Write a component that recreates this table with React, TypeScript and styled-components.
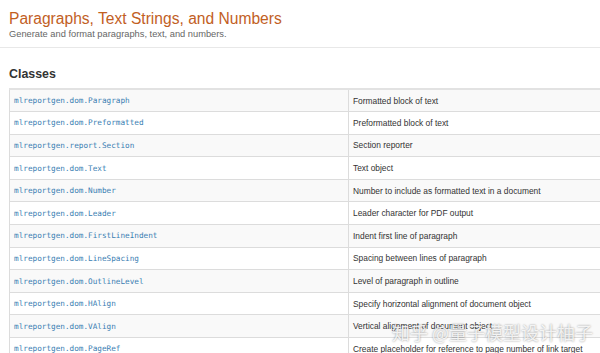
import React from "react";
import styled, { createGlobalStyle } from "styled-components";

const Global = createGlobalStyle`
  body {
    margin: 0;
    background: #fff;
    font-family: "Liberation Sans", Arial, sans-serif;
    overflow: hidden;
  }
`;

const Page = styled.div`
  position: relative;
  width: 600px;
  height: 353px;
  overflow: hidden;
`;

const Header = styled.header`
  padding: 9px 9px 7px;
  border-bottom: 1px solid #e8e8e8;
`;

const Title = styled.h1`
  margin: 0;
  font-size: 15.6px;
  font-weight: normal;
  color: #c2601f;
  line-height: 19px;
`;

const Subtitle = styled.p`
  margin: 0;
  font-size: 9.3px;
  color: #666;
  line-height: 12px;
`;

const Section = styled.section`
  padding: 19px 0 0 9px;
`;

const Heading = styled.h2`
  margin: 0 0 6px;
  font-size: 12.4px;
  font-weight: bold;
  color: #333;
  line-height: 15px;
`;

const Table = styled.table`
  width: 600px;
  border-collapse: collapse;
  border-top: 2px solid #e2e2e2;
  > tbody > tr:nth-child(odd) {
    background: #f9f9f9;
  }
  td {
    height: 22.6px;
    padding: 0 4px;
    border: 1px solid #dcdcdc;
    vertical-align: middle;
    box-sizing: border-box;
  }
`;

const NameCell = styled.td`
  width: 339px;
  font-family: "DejaVu Sans Mono", "Liberation Mono", monospace;
  font-size: 7.7px;
  color: #3b80b3;
`;

const DescCell = styled.td`
  font-size: 8.4px;
  color: #333;
`;

const Watermark = styled.div`
  position: absolute;
  left: 392px;
  top: 320px;
  font-family: "Noto Sans CJK SC", sans-serif;
  font-size: 18px;
  line-height: 24px;
  color: rgba(255, 255, 255, 0.85);
  text-shadow: 0 0 2px rgba(0, 0, 0, 0.45);
  white-space: nowrap;
`;

const rows: [string, string][] = [
  ["mlreportgen.dom.Paragraph", "Formatted block of text"],
  ["mlreportgen.dom.Preformatted", "Preformatted block of text"],
  ["mlreportgen.report.Section", "Section reporter"],
  ["mlreportgen.dom.Text", "Text object"],
  ["mlreportgen.dom.Number", "Number to include as formatted text in a document"],
  ["mlreportgen.dom.Leader", "Leader character for PDF output"],
  ["mlreportgen.dom.FirstLineIndent", "Indent first line of paragraph"],
  ["mlreportgen.dom.LineSpacing", "Spacing between lines of paragraph"],
  ["mlreportgen.dom.OutlineLevel", "Level of paragraph in outline"],
  ["mlreportgen.dom.HAlign", "Specify horizontal alignment of document object"],
  ["mlreportgen.dom.VAlign", "Vertical alignment of document object"],
  ["mlreportgen.dom.PageRef", "Create placeholder for reference to page number of link target"],
];

export default function App() {
  return (
    <Page>
      <Global />
      <Header>
        <Title>Paragraphs, Text Strings, and Numbers</Title>
        <Subtitle>Generate and format paragraphs, text, and numbers.</Subtitle>
      </Header>
      <Section>
        <Heading>Classes</Heading>
        <Table>
          <tbody>
            {rows.map(([name, desc]) => (
              <tr key={name}>
                <NameCell>{name}</NameCell>
                <DescCell>{desc}</DescCell>
              </tr>
            ))}
          </tbody>
        </Table>
      </Section>
      <Watermark>知乎 @量子模型设计柚子</Watermark>
    </Page>
  );
}
